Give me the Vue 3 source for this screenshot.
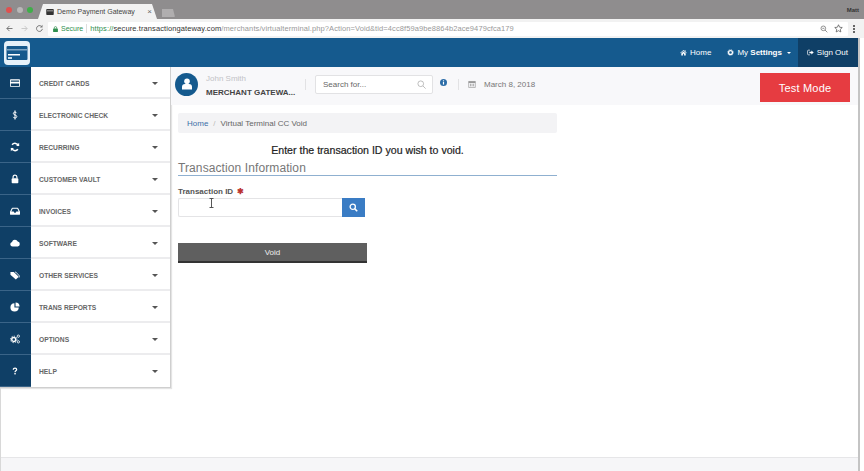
<script setup>
const menu = [
  { label: 'CREDIT CARDS', icon: 'card' },
  { label: 'ELECTRONIC CHECK', icon: 'dollar' },
  { label: 'RECURRING', icon: 'refresh' },
  { label: 'CUSTOMER VAULT', icon: 'lock' },
  { label: 'INVOICES', icon: 'inbox' },
  { label: 'SOFTWARE', icon: 'cloud' },
  { label: 'OTHER SERVICES', icon: 'tags' },
  { label: 'TRANS REPORTS', icon: 'pie' },
  { label: 'OPTIONS', icon: 'cogs' },
  { label: 'HELP', icon: 'help' }
]
</script>

<template>
  <div class="window">
    <div class="tabbar">
      <div class="lights"><i class="red"></i><i class="grey"></i><i class="green"></i></div>
      <div class="tab">
        <svg class="fav" viewBox="0 0 10 8"><rect width="10" height="8" rx="1" fill="#333"/><rect x="1" y="2" width="8" height="1" fill="#ccc"/></svg>
        <span class="tabtitle">Demo Payment Gateway</span>
        <span class="tabx">×</span>
      </div>
      <div class="newtab"></div>
      <span class="user">Matt</span>
    </div>
    <div class="urlbar">
      <svg class="nav" viewBox="0 0 12 12"><path d="M10 6H2.500M6 2.500 2.500 6 6 9.500" fill="none" stroke="#777" stroke-width="1.300"/></svg>
      <svg class="nav" viewBox="0 0 12 12"><path d="M2 6h7.500M6 2.500 9.500 6 6 9.500" fill="none" stroke="#c8c8c8" stroke-width="1.300"/></svg>
      <svg class="nav" viewBox="0 0 12 12"><path d="M9.800 6.500A3.900 3.900 0 1 1 8.600 3.200" fill="none" stroke="#777" stroke-width="1.300"/><path d="M10 1v3.500H6.500z" fill="#777"/></svg>
      <div class="omni">
        <svg class="lockg" viewBox="0 0 8 10"><rect y="4" width="8" height="6" rx="1" fill="#2f8f4e"/><path d="M2 4.500V3a2 2 0 0 1 4 0v1.500" fill="none" stroke="#2f8f4e" stroke-width="1.200"/></svg>
        <span class="secure">Secure</span>
        <span class="omnisep"></span>
        <span class="url"><span class="https">https://</span><span class="host">secure.transactiongateway.com</span>/merchants/virtualterminal.php?Action=Void&amp;tid=4cc8f59a9be8864b2ace9479cfca179</span>
        <svg class="zoomi" viewBox="0 0 12 12"><circle cx="5" cy="5" r="3.500" fill="none" stroke="#777" stroke-width="1.200"/><path d="M7.500 7.500 11 11M3.500 5h3" stroke="#777" stroke-width="1.200"/></svg>
        <svg class="star" viewBox="0 0 12 12"><path d="M6 1l1.500 3.300 3.500.4-2.600 2.400.7 3.500L6 8.900l-3.100 1.700.7-3.500L1 4.700l3.500-.4z" fill="none" stroke="#555" stroke-width="1"/></svg>
      </div>
      <div class="dots"><i></i><i></i><i></i></div>
    </div>

    <div class="page">
      <header class="topnav">
        <div class="logo">
          <svg viewBox="0 0 26 24" width="26" height="24">
            <rect width="26" height="24" rx="4" fill="#e6f1f9"/>
            <rect x="2.500" y="5" width="21" height="14" rx="1" fill="#16598c"/>
            <rect x="2.500" y="8" width="21" height="1.500" fill="#7fa6c4"/>
            <rect x="4" y="13" width="12" height="1.500" fill="#fff"/>
            <rect x="4" y="16" width="4" height="2" fill="#c9dcea"/>
          </svg>
        </div>
        <nav class="links">
          <a class="link">
            <svg viewBox="0 0 12 12"><path d="M6 1.500 0.500 6.500l.8.700L6 3.200l4.700 4 .8-.7-2-1.800V2H8.200v1.500zM2.200 7.500V11h2.800V8h2v3h2.800V7.500L6 4.300z" fill="#fff"/></svg>
            Home
          </a>
          <a class="link settings">
            <svg viewBox="0 0 12 12"><circle cx="6" cy="6" r="3.300" fill="none" stroke="#fff" stroke-width="2.200"/><circle cx="6" cy="6" r="5" fill="none" stroke="#fff" stroke-width="1.400" stroke-dasharray="1.600 2.300"/></svg>
            <span>My <b>Settings</b></span>
            <i class="caretw"></i>
          </a>
          <a class="link signout">
            <svg viewBox="0 0 12 12"><path d="M5 2H2.500A1.500 1.500 0 0 0 1 3.500v5A1.500 1.500 0 0 0 2.500 10H5" fill="none" stroke="#fff" stroke-width="1.200"/><path d="M4 4.700h3.500V2.500L11.500 6 7.500 9.500V7.300H4z" fill="#fff"/></svg>
            Sign Out
          </a>
        </nav>
      </header>

      <div class="body">
        <aside class="side">
          <div v-for="m in menu" :key="m.label" class="row">
            <div class="ic">
              <svg viewBox="0 0 12 12" width="10" height="10">
                <template v-if="m.icon === 'card'"><path d="M1 1.500h10a1 1 0 0 1 1 1v7a1 1 0 0 1-1 1H1a1 1 0 0 1-1-1v-7a1 1 0 0 1 1-1zM1 3v1.500h10V3zM1 6.500V9.500h10V6.500z" fill="#fff" fill-rule="evenodd"/></template>
                <template v-else-if="m.icon === 'dollar'"><path d="M8 3.800C7.600 3 6.900 2.500 6 2.500c-1.200 0-2 .7-2 1.600 0 2.400 4.200 1.300 4.200 3.800 0 1-.9 1.700-2.200 1.700-1 0-1.800-.5-2.200-1.300M6 .5v11" fill="none" stroke="#fff" stroke-width="1.200"/></template>
                <template v-else-if="m.icon === 'refresh'"><path d="M10.300 4.800A4.500 4.500 0 0 0 2.500 3.300M1.700 7.200a4.500 4.500 0 0 0 7.800 1.500" fill="none" stroke="#fff" stroke-width="1.800"/><path d="M11 1v3.800H7.300zM1 11V7.200h3.700z" fill="#fff"/></template>
                <template v-else-if="m.icon === 'lock'"><rect x="2" y="5.200" width="8" height="6" rx="1" fill="#fff"/><path d="M3.700 5.500V3.700a2.300 2.300 0 0 1 4.600 0v1.800" fill="none" stroke="#fff" stroke-width="1.400"/></template>
                <template v-else-if="m.icon === 'inbox'"><path d="M3 2h6a1 1 0 0 1 .9.600L12 7v2.500a1 1 0 0 1-1 1H1a1 1 0 0 1-1-1V7l2.100-4.400A1 1 0 0 1 3 2zM3.200 3.300 1.600 6.700h2.800l.8 1.300h1.600l.8-1.300h2.800L8.800 3.300z" fill="#fff" fill-rule="evenodd"/></template>
                <template v-else-if="m.icon === 'cloud'"><path d="M3 10.200A2.800 2.800 0 0 1 2.400 4.700 3.700 3.700 0 0 1 9.300 4.300 3 3 0 0 1 9.300 10.200z" fill="#fff"/></template>
                <template v-else-if="m.icon === 'tags'"><path d="M0.500 2.500H4.500L10.500 8 7 11.500 0.500 5.800z" fill="#fff"/><path d="M6 2.500H7l4.700 5L10.900 9" fill="none" stroke="#fff"/></template>
                <template v-else-if="m.icon === 'pie'"><path d="M5.300 1.500v5.200h5.200A5 5 0 1 1 5.300 1.500z" fill="#fff"/><path d="M6.700 0.500a5 5 0 0 1 4.800 4.800H6.700z" fill="#fff"/></template>
                <template v-else-if="m.icon === 'cogs'"><circle cx="4.500" cy="6.500" r="2.400" fill="none" stroke="#fff" stroke-width="1.700"/><circle cx="4.500" cy="6.500" r="3.900" fill="none" stroke="#fff" stroke-width="1.100" stroke-dasharray="1.500 1.500"/><circle cx="10" cy="2.600" r="1.400" fill="none" stroke="#fff"/><circle cx="10" cy="9.400" r="1.400" fill="none" stroke="#fff"/></template>
                <template v-else><path d="M4 4.400C4 3.200 4.800 2.500 6 2.500c1.200 0 2 .7 2 1.700 0 1.600-2 1.600-2 3.200" fill="none" stroke="#fff" stroke-width="1.500"/><rect x="5.200" y="8.400" width="1.700" height="1.700" fill="#fff"/></template>
              </svg>
            </div>
            <div class="lbl">
              <span>{{ m.label }}</span>
              <i class="caret"></i>
            </div>
          </div>
        </aside>

        <main class="main">
          <div class="strip">
            <div class="avatar">
              <svg viewBox="0 0 12 12" width="12" height="12"><circle cx="6" cy="3.300" r="2.800" fill="#fff"/><path d="M1 11.500V9a3 3 0 0 1 3-3h4a3 3 0 0 1 3 3v2.500z" fill="#fff"/></svg>
            </div>
            <div class="who">
              <div class="name">John Smith</div>
              <div class="merchant">MERCHANT GATEWA...</div>
            </div>
            <span class="vsep first"></span>
            <div class="search">
              <span>Search for...</span>
              <svg viewBox="0 0 12 12" width="9" height="9"><circle cx="5" cy="5" r="3.800" fill="none" stroke="#aaa" stroke-width="1"/><path d="M8 8l3.500 3.500" stroke="#aaa" stroke-width="1"/></svg>
            </div>
            <svg class="info" viewBox="0 0 12 12" width="7" height="7"><circle cx="6" cy="6" r="6" fill="#2c6da8"/><rect x="5" y="5" width="2" height="4.500" fill="#fff"/><rect x="5" y="2.300" width="2" height="1.700" fill="#fff"/></svg>
            <span class="vsep second"></span>
            <svg class="cal" viewBox="0 0 12 12" width="8" height="8"><path d="M1 2.200h10v9H1z" fill="none" stroke="#999" stroke-width="1"/><path d="M1 2h10v2.500H1zM3 5.700h1.500v1.300H3zM5.300 5.700h1.500v1.300H5.300zM7.600 5.700h1.500v1.300H7.600zM3 8h1.500v1.300H3zM5.300 8h1.500v1.300H5.300zM7.600 8h1.500v1.300H7.600z" fill="#999"/></svg>
            <span class="date">March 8, 2018</span>
            <div class="test">Test Mode</div>
          </div>

          <div class="content">
            <div class="crumbs"><a>Home</a><span class="slash">/</span><span>Virtual Terminal CC Void</span></div>
            <h2 class="prompt">Enter the transaction ID you wish to void.</h2>
            <h3 class="section">Transaction Information</h3>
            <label class="field">Transaction ID <span class="req">✱</span></label>
            <div class="inputrow">
              <div class="input">
                <svg class="cursor" viewBox="0 0 5 10" width="5" height="10"><path d="M0.500 0.500h4M2.500 0.500v9M0.500 9.500h4" fill="none" stroke="#444" stroke-width="0.900"/></svg>
              </div>
              <div class="go">
                <svg viewBox="0 0 12 12" width="9" height="9"><circle cx="5" cy="5" r="3.500" fill="none" stroke="#fff" stroke-width="1.800"/><path d="M7.800 7.800 11 11" stroke="#fff" stroke-width="2"/></svg>
              </div>
            </div>
            <button class="void">Void</button>
          </div>
        </main>
      </div>
      <div class="foot"></div>
    </div>
  </div>
</template>

<style>
html, body { margin: 0; padding: 0; background: #fff; overflow: hidden; }
</style>

<style scoped>
.window { width: 864px; height: 471px; display: flex; flex-direction: column; overflow: hidden; font-family: "Liberation Sans", Arial, sans-serif; color: #444; position: relative; }
.tabbar { height: 19px; background: #8f8d8e; display: flex; align-items: flex-end; position: relative; flex: none; }
.lights { display: flex; gap: 4.500px; padding: 0 0 6px 6px; }
.lights i { width: 6px; height: 6px; border-radius: 50%; display: block; }
.red { background: #e0504f; } .grey { background: #b9b7b8; } .green { background: #3fae49; }
.tab { margin-left: 5px; width: 119px; height: 15px; background: #f2f2f2; display: flex; align-items: center; padding: 0 5px 0 8px; box-sizing: border-box; clip-path: polygon(5px 0, 114px 0, 119px 100%, 0 100%); flex: none; }
.fav { width: 8px; height: 6px; flex: none; }
.tabtitle { font-size: 7px; color: #444; margin-left: 3px; white-space: nowrap; }
.tabx { margin-left: auto; font-size: 8px; color: #666; }
.newtab { width: 15px; height: 8px; background: #b0aeaf; margin: 0 0 2px 3px; clip-path: polygon(2px 0, 13px 0, 15px 100%, 2px 100%); border-radius: 1px; }
.user { position: absolute; right: 5px; top: 7px; font-size: 6px; color: #333; font-weight: 700; }
.urlbar { height: 19px; background: #f2f2f2; display: flex; align-items: center; padding-left: 5px; box-sizing: border-box; flex: none; gap: 5px; }
.nav { width: 9px; height: 9px; flex: none; margin-right: 1px; }
.omni { margin-left: -2px; width: 800px; height: 14px; background: #fff; display: flex; align-items: center; padding: 0 5px; box-sizing: border-box; font-size: 7px; border-radius: 1px; flex: none; }
.lockg { width: 5px; height: 6px; flex: none; }
.secure { color: #2f8f4e; margin-left: 3px; }
.omnisep { width: 1px; height: 9px; background: #ddd; margin: 0 3px; }
.url { color: #999; white-space: nowrap; flex: 1; font-size: 7.500px; letter-spacing: 0.100px; overflow: hidden; }
.https { color: #2f8f4e; }
.host { color: #333; }
.zoomi { width: 8px; height: 8px; flex: none; margin-left: 4px; }
.star { width: 9px; height: 9px; flex: none; margin-left: 6px; }
.dots { display: flex; flex-direction: column; gap: 1px; margin-left: 0; }
.dots i { width: 2px; height: 2px; background: #666; display: block; }
.page { flex: 1; display: flex; flex-direction: column; min-height: 0; background: #fff; margin-right: 6px; border-left: 1px solid #d8d8d8; box-shadow: 2px 0 0 #c4c4c4; }
.topnav { height: 29px; background: #155a8e; display: flex; align-items: center; justify-content: space-between; flex: none; margin-left: -1px; }
.logo { margin-left: 4px; margin-top: 1px; display: flex; }
.links { display: flex; height: 100%; align-items: center; }
.link { color: #fff; font-size: 8px; display: flex; align-items: center; gap: 3px; margin-right: 16px; white-space: nowrap; }
.link svg { width: 7px; height: 7px; flex: none; }
.link b { font-weight: 700; }
.settings { margin-right: 7px; }
.caretw { width: 0; height: 0; border-left: 2px solid transparent; border-right: 2px solid transparent; border-top: 2px solid #fff; margin-left: 2px; }
.signout { background: #0f3f66; height: 100%; margin: 0; padding: 0 10px 0 9px; }
.body { flex: 1; display: flex; min-height: 0; }
.side { width: 170px; flex: none; margin-left: -1px; align-self: flex-start; border-right: 1px solid #cfcfcf; border-bottom: 1px solid #cfcfcf; box-shadow: 1px 1px 1px #e4e4e4; display: flex; flex-direction: column; }
.row { height: 32px; display: flex; box-sizing: border-box; }
.ic { width: 31px; background: #0f3f66; box-shadow: inset 0 -1px 0 #3a6488; display: flex; align-items: center; justify-content: center; padding-right: 2px; box-sizing: border-box; flex: none; }
.lbl { flex: 1; display: flex; align-items: center; justify-content: space-between; padding: 0 12px 0 8px; box-shadow: inset 0 -2px 0 #ececee; background: #fff; font-size: 6.700px; font-weight: 700; color: #666; white-space: nowrap; }
.row:last-child .lbl { box-shadow: none; }
.caret { width: 0; height: 0; border-left: 3px solid transparent; border-right: 3px solid transparent; border-top: 3px solid #555; }
.main { flex: 1; min-width: 0; display: flex; flex-direction: column; }
.strip { height: 38px; background: #f8f8fa; display: flex; align-items: center; flex: none; position: relative; padding: 0 0 4px 4px; box-sizing: border-box; }
.avatar { width: 23px; height: 23px; border-radius: 50%; background: #155a8e; display: flex; align-items: center; justify-content: center; flex: none; }
.who { margin-left: 8px; margin-top: 2px; width: 90px; }
.name { font-size: 8px; color: #c2c2c6; line-height: 11px; }
.merchant { font-size: 8px; font-weight: 700; color: #444; line-height: 11px; margin-top: 3px; white-space: nowrap; }
.vsep { width: 1px; height: 11px; background: #e2e2e4; flex: none; }
.first { margin-left: 9px; }
.search { margin-left: 9px; width: 118px; height: 19px; background: #fff; border: 1px solid #e2e2e4; border-radius: 2px; display: flex; align-items: center; justify-content: space-between; padding: 0 6px 0 7px; box-sizing: border-box; font-size: 8px; color: #666; flex: none; }
.info { margin-left: 7px; flex: none; margin-top: -3px; }
.second { margin-left: 11px; }
.cal { margin-left: 9px; flex: none; }
.date { margin-left: 8px; font-size: 8px; color: #777; white-space: nowrap; }
.test { position: absolute; left: 589px; top: 6px; width: 90px; height: 29px; background: #e63c41; color: #fff; font-size: 11px; display: flex; align-items: center; justify-content: center; letter-spacing: 0.200px; }
.content { width: 379px; margin-left: 7px; padding-top: 8px; display: flex; flex-direction: column; align-items: stretch; }
.crumbs { height: 20px; background: #f3f3f5; border-radius: 2px; display: flex; align-items: center; padding-left: 9px; font-size: 8px; color: #666; gap: 5px; }
.crumbs a { color: #3d6fa8; }
.slash { color: #bbb; }
.prompt { margin: 11px 0 0 0; font-size: 10.600px; line-height: 13px; font-weight: 400; color: #222; text-align: center; -webkit-text-stroke: 0.200px #222; }
.section { margin: 4px 0 0 0; font-size: 12px; line-height: 14px; height: 14px; font-weight: 400; color: #777; border-bottom: 1px solid #8fb0d0; letter-spacing: 0.100px; }
.field { margin-top: 11px; font-size: 8px; font-weight: 700; color: #555; line-height: 10px; }
.req { color: #b33; font-size: 8px; margin-left: 2px; }
.inputrow { display: flex; margin-top: 1px; width: 187px; height: 19px; }
.input { flex: 1; border: 1px solid #e4e4e6; border-right: none; border-radius: 2px 0 0 2px; background: #fff; position: relative; box-sizing: border-box; }
.cursor { position: absolute; left: 30px; top: -1px; }
.go { width: 23px; background: #3a7cc4; display: flex; align-items: center; justify-content: center; flex: none; }
.void { margin-top: 26px; width: 189px; height: 20px; background: #5f5f5f; border: none; border-bottom: 2px solid #333; color: #eee; font-family: inherit; font-size: 8px; padding: 0; }
.foot { margin-top: auto; height: 14px; background: #f6f6f8; border-top: 1px solid #e6e6e8; flex: none; box-sizing: border-box; }
</style>
